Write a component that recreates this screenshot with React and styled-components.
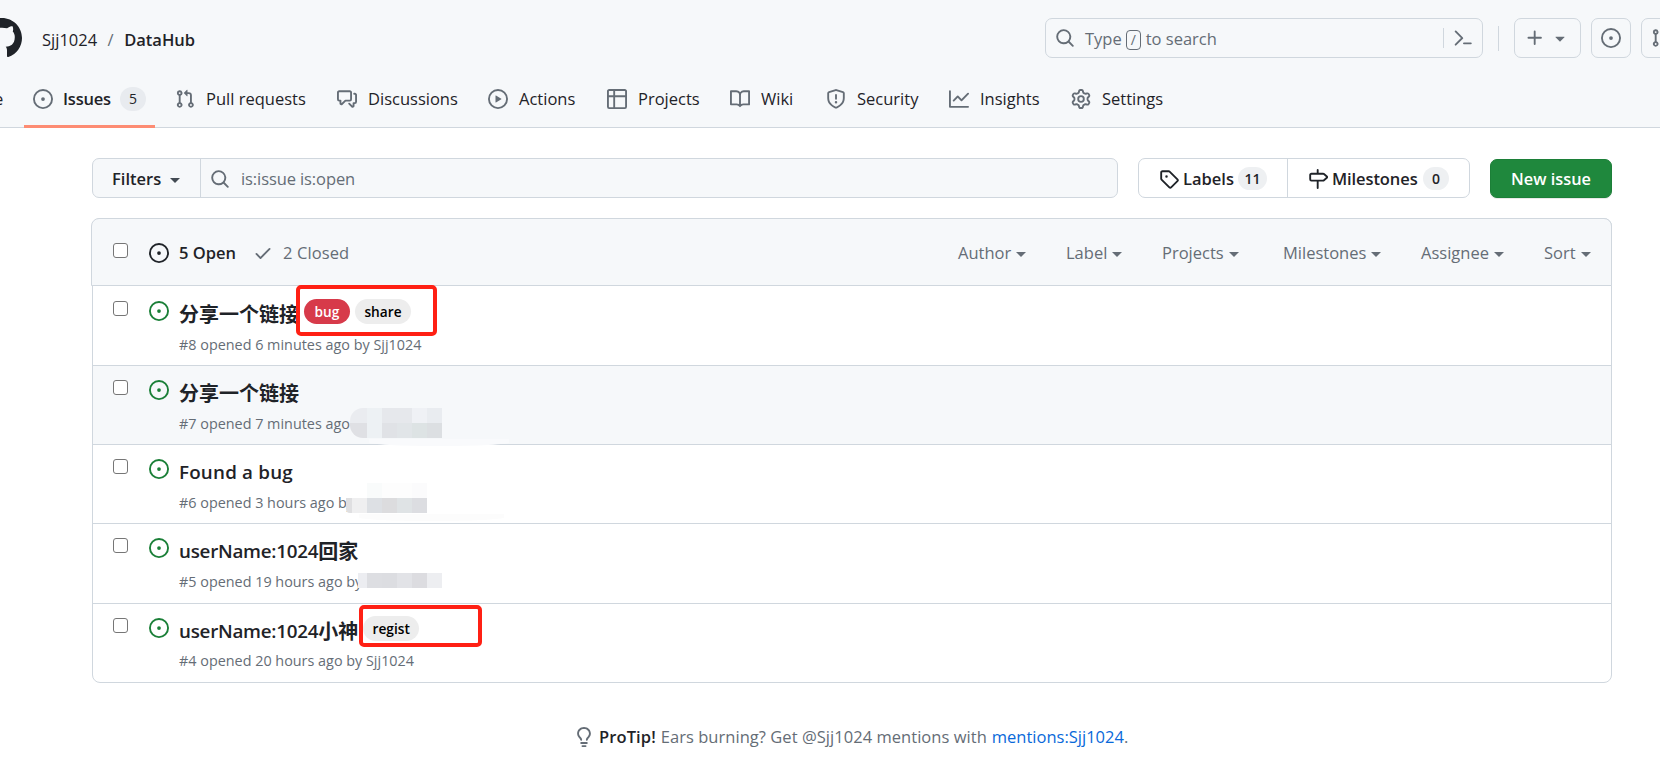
import React from 'react';
import styled, { createGlobalStyle, css } from 'styled-components';

const GlobalStyle = createGlobalStyle`
  * {
    box-sizing: border-box;
  }
  body {
    margin: 0;
    background: #ffffff;
    color: #1f2328;
    font-family: "Open Sans", "Noto Sans CJK SC", sans-serif;
    font-size: 16.5px;
    line-height: 24px;
    overflow: hidden;
  }
`;

const paths = {
  github: 'M8 0c4.42 0 8 3.58 8 8a8.013 8.013 0 0 1-5.45 7.59c-.4.08-.55-.17-.55-.38 0-.27.01-1.13.01-2.2 0-.75-.25-1.23-.54-1.48 1.78-.2 3.65-.88 3.65-3.95 0-.88-.31-1.59-.82-2.15.08-.2.36-1.02-.08-2.12 0 0-.67-.22-2.2.82-.64-.18-1.32-.27-2-.27-.68 0-1.36.09-2 .27-1.53-1.03-2.2-.82-2.2-.82-.44 1.1-.16 1.92-.08 2.12-.51.56-.82 1.28-.82 2.15 0 3.06 1.86 3.75 3.64 3.95-.23.2-.44.55-.51 1.07-.46.21-1.61.55-2.33-.66-.15-.24-.6-.83-1.23-.82-.67.01-.27.38.01.53.34.19.73.9.82 1.13.16.45.68 1.31 2.69.94 0 .67.01 1.3.01 1.49 0 .21-.15.45-.55.38A7.995 7.995 0 0 1 0 8c0-4.42 3.58-8 8-8Z',
  issue: 'M8 9.5a1.5 1.5 0 1 0 0-3 1.5 1.5 0 0 0 0 3ZM8 0a8 8 0 1 1 0 16A8 8 0 0 1 8 0ZM1.5 8a6.5 6.5 0 1 0 13 0 6.5 6.5 0 0 0-13 0Z',
  pull: 'M1.5 3.25a2.25 2.25 0 1 1 3 2.122v5.256a2.251 2.251 0 1 1-1.5 0V5.372A2.25 2.25 0 0 1 1.5 3.25Zm5.677-.177L9.573.677A.25.25 0 0 1 10 .854V2.5h1A2.5 2.5 0 0 1 13.5 5v5.628a2.251 2.251 0 1 1-1.5 0V5a1 1 0 0 0-1-1h-1v1.646a.25.25 0 0 1-.427.177L7.177 3.427a.25.25 0 0 1 0-.354ZM3.75 2.5a.75.75 0 1 0 0 1.5.75.75 0 0 0 0-1.5Zm0 9.5a.75.75 0 1 0 0 1.5.75.75 0 0 0 0-1.5Zm8.25.75a.75.75 0 1 0 1.5 0 .75.75 0 0 0-1.5 0Z',
  discussion: 'M1.75 1h8.5c.966 0 1.75.784 1.75 1.75v5.5A1.75 1.75 0 0 1 10.25 10H7.061l-2.574 2.573A1.458 1.458 0 0 1 2 11.543V10h-.25A1.75 1.75 0 0 1 0 8.25v-5.5C0 1.784.784 1 1.75 1ZM1.5 2.75v5.5c0 .138.112.25.25.25h1a.75.75 0 0 1 .75.75v2.19l2.72-2.72a.749.749 0 0 1 .53-.22h3.5a.25.25 0 0 0 .25-.25v-5.5a.25.25 0 0 0-.25-.25h-8.5a.25.25 0 0 0-.25.25Zm13 2a.25.25 0 0 0-.25-.25h-.5a.75.75 0 0 1 0-1.5h.5c.966 0 1.75.784 1.75 1.75v5.5A1.75 1.75 0 0 1 14.25 12H14v1.543a1.458 1.458 0 0 1-2.487 1.03L9.22 12.28a.749.749 0 0 1 .326-1.275.749.749 0 0 1 .734.215l2.22 2.22v-2.19a.75.75 0 0 1 .75-.75h1a.25.25 0 0 0 .25-.25Z',
  play: 'M8 0a8 8 0 1 1 0 16A8 8 0 0 1 8 0ZM1.5 8a6.5 6.5 0 1 0 13 0 6.5 6.5 0 0 0-13 0Zm4.879-2.773 4.264 2.559a.25.25 0 0 1 0 .428l-4.264 2.559A.25.25 0 0 1 6 10.559V5.442a.25.25 0 0 1 .379-.215Z',
  table: 'M0 1.75C0 .784.784 0 1.75 0h12.5C15.216 0 16 .784 16 1.75v12.5A1.75 1.75 0 0 1 14.25 16H1.75A1.75 1.75 0 0 1 0 14.25ZM6.5 6.5v8h7.75a.25.25 0 0 0 .25-.25V6.5Zm8-1.5V1.75a.25.25 0 0 0-.25-.25H6.5V5Zm-13 1.5v7.75c0 .138.112.25.25.25H5v-8ZM5 5V1.5H1.75a.25.25 0 0 0-.25.25V5Z',
  book: 'M0 1.75A.75.75 0 0 1 .75 1h4.253c1.227 0 2.317.59 3 1.501A3.743 3.743 0 0 1 11.006 1h4.245a.75.75 0 0 1 .75.75v10.5a.75.75 0 0 1-.75.75h-4.507a2.25 2.25 0 0 0-1.591.659l-.622.621a.75.75 0 0 1-1.06 0l-.622-.621A2.25 2.25 0 0 0 5.258 13H.75a.75.75 0 0 1-.75-.75Zm7.251 10.324.004-5.073-.002-2.253A2.25 2.25 0 0 0 5.003 2.5H1.5v9h3.757a3.75 3.75 0 0 1 1.994.574ZM8.755 4.75l-.004 7.322a3.752 3.752 0 0 1 1.992-.572H14.5v-9h-3.495a2.25 2.25 0 0 0-2.25 2.25Z',
  shield: 'M7.467.133a1.748 1.748 0 0 1 1.066 0l5.25 1.68A1.75 1.75 0 0 1 15 3.48V7c0 1.566-.32 3.182-1.303 4.682-.983 1.498-2.585 2.813-5.032 3.855a1.697 1.697 0 0 1-1.33 0c-2.447-1.042-4.049-2.357-5.032-3.855C1.32 10.182 1 8.566 1 7V3.48a1.755 1.755 0 0 1 1.217-1.667Zm.61 1.429a.25.25 0 0 0-.153 0l-5.25 1.68a.25.25 0 0 0-.174.238V7c0 1.358.275 2.666 1.057 3.86.784 1.194 2.121 2.34 4.366 3.297a.196.196 0 0 0 .154 0c2.245-.956 3.582-2.104 4.366-3.298C13.225 9.666 13.5 8.36 13.5 7V3.48a.251.251 0 0 0-.174-.237l-5.25-1.68ZM8.75 4.75v3a.75.75 0 0 1-1.5 0v-3a.75.75 0 0 1 1.5 0ZM9 10.5a1 1 0 1 1-2 0 1 1 0 0 1 2 0Z',
  graph: 'M1.5 1.75V13.5h13.75a.75.75 0 0 1 0 1.5H.75a.75.75 0 0 1-.75-.75V1.75a.75.75 0 0 1 1.5 0Zm14.28 2.53-5.25 5.25a.75.75 0 0 1-1.06 0L7 7.06 4.28 9.78a.751.751 0 0 1-1.042-.018.751.751 0 0 1-.018-1.042l3.25-3.25a.75.75 0 0 1 1.06 0L10 7.94l4.72-4.72a.751.751 0 0 1 1.042.018.751.751 0 0 1 .018 1.042Z',
  gear: 'M8 0a8.2 8.2 0 0 1 .701.031C9.444.095 9.99.645 10.16 1.29l.288 1.107c.018.066.079.158.212.224.231.114.454.243.668.386.123.082.233.09.299.071l1.103-.303c.644-.176 1.392.021 1.82.63.27.385.506.792.704 1.218.315.675.111 1.422-.364 1.891l-.814.806c-.049.048-.098.147-.088.294.016.257.016.515 0 .772-.01.147.038.246.088.294l.814.806c.475.469.679 1.216.364 1.891a7.977 7.977 0 0 1-.704 1.217c-.428.61-1.176.807-1.82.63l-1.102-.302c-.067-.019-.177-.011-.3.071a5.909 5.909 0 0 1-.668.386c-.133.066-.194.158-.211.224l-.29 1.106c-.168.646-.715 1.196-1.458 1.26a8.006 8.006 0 0 1-1.402 0c-.743-.064-1.289-.614-1.458-1.26l-.289-1.106c-.018-.066-.079-.158-.212-.224a5.738 5.738 0 0 1-.668-.386c-.123-.082-.233-.09-.299-.071l-1.103.303c-.644.176-1.392-.021-1.82-.63a8.12 8.12 0 0 1-.704-1.218c-.315-.675-.111-1.422.363-1.891l.815-.806c.05-.048.098-.147.088-.294a6.214 6.214 0 0 1 0-.772c.01-.147-.038-.246-.088-.294l-.815-.806C.635 6.045.431 5.298.746 4.623a7.92 7.92 0 0 1 .704-1.217c.428-.61 1.176-.807 1.82-.63l1.102.302c.067.019.177.011.3-.071.214-.143.437-.272.668-.386.133-.066.194-.158.211-.224l.29-1.106C6.009.645 6.556.095 7.299.03 7.53.01 7.764 0 8 0Zm-.571 1.525c-.036.003-.108.036-.137.146l-.289 1.105c-.147.561-.549.967-.998 1.189-.173.086-.34.183-.5.29-.417.278-.97.423-1.529.27l-1.103-.303c-.109-.03-.175.016-.195.045-.22.312-.412.644-.573.99-.014.031-.021.11.059.19l.815.806c.411.406.562.957.53 1.456a4.709 4.709 0 0 0 0 .582c.032.499-.119 1.05-.53 1.456l-.815.806c-.081.08-.073.159-.059.19.162.346.353.677.573.989.02.03.085.076.195.046l1.102-.303c.56-.153 1.113-.008 1.53.27.161.107.328.204.501.29.447.222.85.629.997 1.189l.289 1.105c.029.109.101.143.137.146a6.6 6.6 0 0 0 1.142 0c.036-.003.108-.036.137-.146l.289-1.105c.147-.561.549-.967.998-1.189.173-.086.34-.183.5-.29.417-.278.97-.423 1.529-.27l1.103.303c.109.029.175-.016.195-.045.22-.313.411-.644.573-.99.014-.031.021-.11-.059-.19l-.815-.806c-.411-.406-.562-.957-.53-1.456a4.709 4.709 0 0 0 0-.582c-.032-.499.119-1.05.53-1.456l.815-.806c.081-.08.073-.159.059-.19a6.464 6.464 0 0 0-.573-.989c-.02-.03-.085-.076-.195-.046l-1.102.303c-.56.153-1.113.008-1.53-.27a4.44 4.44 0 0 0-.501-.29c-.447-.222-.85-.629-.997-1.189l-.289-1.105c-.029-.11-.101-.143-.137-.146a6.6 6.6 0 0 0-1.142 0ZM11 8a3 3 0 1 1-6 0 3 3 0 0 1 6 0ZM9.5 8a1.5 1.5 0 1 0-3.001.001A1.5 1.5 0 0 0 9.5 8Z',
  search: 'M10.68 11.74a6 6 0 0 1-7.922-8.982 6 6 0 0 1 8.982 7.922l3.04 3.04a.749.749 0 0 1-.326 1.275.749.749 0 0 1-.734-.215ZM11.5 7a4.499 4.499 0 1 0-8.997 0A4.499 4.499 0 0 0 11.5 7Z',
  prompt: 'm6.354 8.04-4.773 4.773a.75.75 0 1 0 1.061 1.06L7.945 8.57a.75.75 0 0 0 0-1.06L2.642 2.206a.75.75 0 0 0-1.06 1.061L6.353 8.04ZM8.75 11.5a.75.75 0 0 0 0 1.5h5.5a.75.75 0 0 0 0-1.5h-5.5Z',
  plus: 'M7.75 2a.75.75 0 0 1 .75.75V7h4.25a.75.75 0 0 1 0 1.5H8.5v4.25a.75.75 0 0 1-1.5 0V8.5H2.75a.75.75 0 0 1 0-1.5H7V2.75A.75.75 0 0 1 7.75 2Z',
  triangle: 'm4.427 7.427 3.396 3.396a.25.25 0 0 0 .354 0l3.396-3.396A.25.25 0 0 0 11.396 7H4.604a.25.25 0 0 0-.177.427Z',
  tag: 'M1 7.775V2.75C1 1.784 1.784 1 2.75 1h5.025c.464 0 .91.184 1.238.513l6.25 6.25a1.75 1.75 0 0 1 0 2.474l-5.026 5.026a1.75 1.75 0 0 1-2.474 0l-6.25-6.25A1.752 1.752 0 0 1 1 7.775Zm1.5 0c0 .066.026.13.073.177l6.25 6.25a.25.25 0 0 0 .354 0l5.025-5.025a.25.25 0 0 0 0-.354l-6.25-6.25a.25.25 0 0 0-.177-.073H2.75a.25.25 0 0 0-.25.25ZM6 5a1 1 0 1 1 0 2 1 1 0 0 1 0-2Z',
  milestone: 'M7.75 0a.75.75 0 0 1 .75.75V3h3.634c.414 0 .814.147 1.13.414l2.07 1.75a1.75 1.75 0 0 1 0 2.672l-2.07 1.75a1.75 1.75 0 0 1-1.13.414H8.5v5.25a.75.75 0 0 1-1.5 0V10H2.75A1.75 1.75 0 0 1 1 8.25v-3.5C1 3.784 1.784 3 2.75 3H7V.75A.75.75 0 0 1 7.75 0Zm4.384 8.5a.25.25 0 0 0 .161-.06l2.07-1.75a.248.248 0 0 0 0-.38l-2.07-1.75a.25.25 0 0 0-.161-.06H2.75a.25.25 0 0 0-.25.25v3.5c0 .138.112.25.25.25h9.384Z',
  check: 'M13.78 4.22a.75.75 0 0 1 0 1.06l-7.25 7.25a.75.75 0 0 1-1.06 0L2.22 9.28a.751.751 0 0 1 .018-1.042.751.751 0 0 1 1.042-.018L6 10.94l6.72-6.72a.75.75 0 0 1 1.06 0Z',
  bulb: 'M8 1.5c-2.363 0-4 1.69-4 3.75 0 .984.424 1.625.984 2.304l.214.253c.223.264.47.556.673.848.284.411.537.896.621 1.49a.75.75 0 0 1-1.484.211c-.04-.282-.163-.547-.37-.847a8.456 8.456 0 0 0-.542-.68c-.084-.1-.173-.205-.268-.32C3.201 7.75 2.5 6.766 2.5 5.25 2.5 2.31 4.863 0 8 0s5.5 2.31 5.5 5.25c0 1.516-.701 2.5-1.328 3.259-.095.115-.184.22-.268.319-.207.245-.383.453-.541.681-.208.3-.33.565-.37.847a.751.751 0 0 1-1.485-.212c.084-.593.337-1.078.621-1.489.203-.292.45-.584.673-.848.075-.088.147-.173.213-.253.561-.679.985-1.32.985-2.304 0-2.06-1.637-3.75-4-3.75ZM5.75 12h4.5a.75.75 0 0 1 0 1.5h-4.5a.75.75 0 0 1 0-1.5ZM6 15.25a.75.75 0 0 1 .75-.75h2.5a.75.75 0 0 1 0 1.5h-2.5a.75.75 0 0 1-.75-.75Z',
};

const Svg = styled.svg`
  display: block;
  flex: none;
  width: ${({ $size }) => $size || 20}px;
  height: ${({ $size }) => $size || 20}px;
  fill: ${({ $color }) => $color || '#656d76'};
`;

const Icon = ({ name, size, color }) => (
  <Svg viewBox="0 0 16 16" $size={size} $color={color}>
    <path fillRule="evenodd" d={paths[name]} />
  </Svg>
);

const Text = styled.span`
  flex: none;
  white-space: pre;
  width: ${({ $w }) => ($w ? `${$w}px` : 'auto')};
  letter-spacing: ${({ $ls }) => $ls || 0}px;
  font-weight: ${({ $bold }) => ($bold ? 600 : 400)};
`;

const Page = styled.div`
  width: 1660px;
  height: 771px;
  overflow: hidden;
`;

const Header = styled.header`
  height: 128px;
  background: #f6f8fa;
  border-bottom: 1px solid #d0d7de;
`;

const TopBar = styled.div`
  display: flex;
  align-items: center;
  height: 76px;
  margin-left: -18px;
  width: 1720px;
`;

const Crumbs = styled.div`
  display: flex;
  align-items: center;
  flex: none;
  width: 1023px;
  height: 40px;
  padding: 3px 0 0 20px;
`;

const Slash = styled.span`
  width: 27px;
  text-align: center;
  color: #656d76;
`;

const SearchBox = styled.div`
  display: flex;
  align-items: center;
  flex: none;
  width: 438px;
  height: 40px;
  padding: 0 9px 0 9px;
  border: 1px solid #d0d7de;
  border-radius: 7px;
  color: #656d76;
`;

const Hint = styled.div`
  display: flex;
  align-items: center;
  flex: 1;
  padding: 2px 0 0 10px;
`;

const Key = styled.kbd`
  width: 15px;
  height: 20px;
  margin: 2px 5px 0 4px;
  border: 1px solid #656d76;
  border-radius: 4px;
  font: 14px/17px "Open Sans", sans-serif;
  text-align: center;
`;

const Divider = styled.div`
  flex: none;
  width: 1px;
  height: ${({ $h }) => $h}px;
  margin: ${({ $m }) => $m};
  background: #d0d7de;
`;

const HeaderButton = styled.div`
  display: flex;
  align-items: center;
  justify-content: center;
  gap: ${({ $gap }) => $gap || 0}px;
  flex: none;
  width: ${({ $w }) => $w || 40}px;
  height: 40px;
  margin-right: 10px;
  border: 1px solid #d0d7de;
  border-radius: 7px;
`;

const Nav = styled.nav`
  display: grid;
  grid-template-columns: 23px 142px 162px 151px 119px 123px 96px 123px 122px auto;
  height: 52px;
`;

const Clipped = styled.span`
  padding-top: 11px;
  margin-left: -6px;
`;

const NavItem = styled.div`
  display: flex;
  align-items: center;
  gap: 11px;
  margin-right: 10px;
  padding: 0 0 7px 10px;
  ${({ $active }) => $active && css`
    gap: 10px;
    margin-left: 1px;
    padding-left: 9px;
    border-bottom: 3px solid #fd8c73;
    padding-bottom: 4px;
  `}
`;

const Counter = styled.span`
  flex: none;
  width: ${({ $w }) => $w || 26}px;
  height: ${({ $h }) => $h || 24}px;
  border-radius: 12px;
  background: ${({ $bg }) => $bg || '#eef0f2'};
  font-size: 14px;
  font-weight: ${({ $bold }) => ($bold ? 600 : 400)};
  line-height: ${({ $h }) => $h || 24}px;
  text-align: center;
`;

const Main = styled.main`
  width: 1520px;
  margin: 30px 0 0 92px;
`;

const Toolbar = styled.div`
  display: flex;
  height: 40px;
  margin-bottom: 20px;
`;

const FilterGroup = styled.div`
  display: flex;
  width: 1026px;
  height: 40px;
  border: 1px solid #d0d7de;
  border-radius: 7px;
  background: #f6f8fa;
`;

const FilterButton = styled.div`
  display: flex;
  align-items: center;
  width: 108px;
  padding: 1px 0 0 19px;
  border-right: 1px solid #d0d7de;
`;

const FilterInput = styled.div`
  display: flex;
  align-items: center;
  gap: 11px;
  padding: 1px 0 0 9px;
  color: #656d76;
`;

const LinkGroup = styled.div`
  display: flex;
  width: 332px;
  margin: 0 20px;
  border: 1px solid #d0d7de;
  border-radius: 7px;
`;

const LinkButton = styled.div`
  display: flex;
  align-items: center;
  gap: 4px;
  width: ${({ $w }) => $w}px;
  padding: 1px 0 0 20px;
  & + & {
    border-left: 1px solid #d0d7de;
  }
`;

const NewIssue = styled.button`
  width: 122px;
  height: 39px;
  margin-top: 1px;
  padding: 1px 0 0;
  border: 1px solid #1c7f38;
  border-radius: 7px;
  background: #1f883d;
  box-shadow: 0 1px 0 rgba(31, 35, 40, 0.1);
  color: #ffffff;
  font: 600 16.3px "Open Sans", sans-serif;
`;

const Box = styled.section`
  border: 1px solid #d0d7de;
  border-radius: 8px;
  height: 465px;
`;

const BoxHeader = styled.div`
  display: flex;
  align-items: center;
  height: 68px;
  margin: -1px -1px 0 -2px;
  padding: 1px 0 0 22px;
  border: 1px solid #d0d7de;
  border-radius: 8px 8px 0 0;
  background: #f6f8fa;
  color: #656d76;
`;

const Checkbox = styled.span`
  flex: none;
  width: 15px;
  height: 15px;
  border: 1px solid #767676;
  border-radius: 3px;
  background: #ffffff;
`;

const HeaderCheck = styled(Checkbox)`
  margin: -5px 21px 0 -1px;
`;

const OpenCount = styled.div`
  display: flex;
  align-items: center;
  gap: 10px;
  width: 104px;
  color: #1f2328;
`;

const ClosedCount = styled.div`
  display: flex;
  align-items: center;
  gap: 10px;
  flex: 1;
`;

const Menus = styled.div`
  display: grid;
  grid-template-columns: 108px 96px 121px 138px 123px 67px;
`;

const Menu = styled.div`
  display: flex;
  align-items: center;
`;

const Caret = styled.span`
  width: 0;
  height: 0;
  margin: 3px 0 0 5px;
  border: 5px solid transparent;
  border-top-color: ${({ $dark }) => ($dark ? '#424a53' : '#656d76')};
  border-bottom: 0;
`;

const Row = styled.div`
  position: relative;
  display: flex;
  height: ${({ $h }) => $h}px;
  padding: 15px 0 0 20px;
  background: ${({ $hover }) => ($hover ? '#f6f8fa' : 'transparent')};
  & + & {
    border-top: 1px solid #d0d7de;
    padding-top: 14px;
  }
`;

const RowIcon = styled.div`
  margin: 0 10px 0 21px;
`;

const TitleLine = styled.div`
  display: flex;
  align-items: center;
  height: 26px;
  font-size: 18.8px;
  font-weight: 600;
  white-space: nowrap;
`;

const Cjk = styled.span`
  font-family: "Noto Sans CJK SC", sans-serif;
  font-size: 20px;
  font-weight: 700;
`;

const Meta = styled.div`
  height: 22px;
  margin-top: 8px;
  color: #656d76;
  font-size: 14.38px;
  line-height: 20px;
  white-space: pre;
  ${Row}:last-child & {
    margin-top: 7px;
  }
`;

const Badge = styled.span`
  position: relative;
  top: -3px;
  width: ${({ $w }) => $w}px;
  height: 25px;
  margin-left: 5px;
  border-radius: 13px;
  background: ${({ $bg }) => $bg || '#ededed'};
  color: ${({ $fg }) => $fg || '#000000'};
  font-size: 13.7px;
  font-weight: 600;
  line-height: 25px;
  text-align: center;
`;

const Highlight = styled.div`
  position: absolute;
  left: ${({ $x }) => $x}px;
  top: ${({ $y }) => $y}px;
  width: ${({ $w }) => $w}px;
  height: ${({ $h }) => $h}px;
  border: 4px solid #ff2014;
  border-radius: 5px;
`;

// pixelated cover over a user name
const Mosaic = styled.div`
  position: absolute;
  left: ${({ $x }) => $x}px;
  top: ${({ $y }) => $y}px;
  display: grid;
  grid-template-columns: ${({ $cols }) => $cols};
  grid-auto-rows: 15px;
  border-radius: ${({ $r }) => $r || 0};
  overflow: hidden;
`;

const Cell = styled.span`
  background: ${({ $c }) => $c};
`;

const Smear = styled.div`
  position: absolute;
  z-index: 1;
  left: ${({ $x }) => $x}px;
  top: ${({ $y }) => $y}px;
  width: ${({ $w }) => $w}px;
  height: ${({ $h }) => $h}px;
  border-radius: 0 0 50% 50%;
  background: ${({ $c }) => $c};
`;

const ProTip = styled.div`
  display: flex;
  align-items: center;
  margin: 42px 0 0 482px;
  color: #656d76;
`;

const Strong = styled(Text)`
  margin: 0 5px 0 5px;
  color: #1f2328;
`;

const Link = styled(Text)`
  margin-left: 5px;
  color: #0969da;
`;

const navItems = [
  { icon: 'pull', label: 'Pull requests' },
  { icon: 'discussion', label: 'Discussions' },
  { icon: 'play', label: 'Actions' },
  { icon: 'table', label: 'Projects' },
  { icon: 'book', label: 'Wiki' },
  { icon: 'shield', label: 'Security' },
  { icon: 'graph', label: 'Insights' },
  { icon: 'gear', label: 'Settings' },
];

const menus = ['Author', 'Label', 'Projects', 'Milestones', 'Assignee', 'Sort'];

const issues = [
  {
    id: 8, h: 79, cjk: '分享一个链接', meta: '#8 opened 6 minutes ago by Sjj1024',
    badges: [{ text: 'bug', w: 46, bg: '#d73a4a', fg: '#ffffff' }, { text: 'share', w: 56 }],
    box: { x: 203, y: -1, w: 141, h: 51 },
  },
  {
    id: 7, h: 79, hover: true, cjk: '分享一个链接', meta: '#7 opened 7 minutes ago',
    mosaic: {
      x: 257, y: 42, cols: '17px repeat(5, 15px)', r: '13px 0 0 13px',
      cells: ['#eaecf0', '#edf1f4', '#e6e8ec', '#e6e8ec', '#eff1f5', '#e9ecf0', '#dfe0e4', '#edf1f4', '#e0e2e6', '#e1e5e8', '#dde3e4', '#dcdfe2'],
    },
    smear: { x: 276, y: 73, w: 140, h: 7, c: '#f9fafc' },
  },
  {
    id: 6, h: 79, latin: 'Found a bug', ls: 0.2, meta: '#6 opened 3 hours ago by',
    mosaic: {
      x: 253, y: 38, cols: '6px repeat(5, 15px)', r: '0 0 0 4px',
      cells: ['#ffffff00', '#ffffff00', '#f9fbfb', '#fdfdfd', '#fdfdfd', '#fbfbfc', '#dfdfe1', '#efeff0', '#dde0e4', '#dcdcde', '#dfe3e5', '#dcdde1'],
    },
    smear: { x: 266, y: 69, w: 145, h: 7, c: '#fcfcfc' },
  },
  {
    id: 5, h: 80, latin: 'userName:1024', ls: -0.25, cjk: '回家', meta: '#5 opened 19 hours ago by',
    mosaic: {
      x: 265, y: 49, cols: '9px repeat(5, 15px)', r: '0',
      cells: ['#ecedf1', '#dddee2', '#dcdde1', '#e2e3e7', '#dcdce0', '#edeef1'],
    },
  },
  {
    id: 4, h: 79, latin: 'userName:1024', ls: -0.25, cjk: '小神', meta: '#4 opened 20 hours ago by Sjj1024',
    badges: [{ text: 'regist', w: 56 }],
    box: { x: 266, y: 1, w: 123, h: 42 },
  },
];

const IssueRow = ({ issue }) => (
  <Row $h={issue.h} $hover={issue.hover}>
    <Checkbox />
    <RowIcon><Icon name="issue" color="#1a7f37" /></RowIcon>
    <div>
      <TitleLine>
        {issue.latin && <Text $bold $ls={issue.ls}>{issue.latin}</Text>}
        {issue.cjk && <Cjk>{issue.cjk}</Cjk>}
        {issue.badges && issue.badges.map((b) => (
          <Badge key={b.text} $w={b.w} $bg={b.bg} $fg={b.fg}>{b.text}</Badge>
        ))}
      </TitleLine>
      <Meta>{issue.meta}</Meta>
    </div>
    {issue.smear && (
      <Smear $x={issue.smear.x} $y={issue.smear.y} $w={issue.smear.w} $h={issue.smear.h} $c={issue.smear.c} />
    )}
    {issue.mosaic && (
      <Mosaic $x={issue.mosaic.x} $y={issue.mosaic.y} $cols={issue.mosaic.cols} $r={issue.mosaic.r}>
        {issue.mosaic.cells.map((c, i) => <Cell key={i} $c={c} />)}
      </Mosaic>
    )}
    {issue.box && <Highlight $x={issue.box.x} $y={issue.box.y} $w={issue.box.w} $h={issue.box.h} />}
  </Row>
);

const App = () => (
  <Page>
    <GlobalStyle />
    <Header>
      <TopBar>
        <Icon name="github" size={40} color="#1f2328" />
        <Crumbs>
          <Text>Sjj1024</Text>
          <Slash>/</Slash>
          <Text $bold>DataHub</Text>
        </Crumbs>
        <SearchBox>
          <Icon name="search" />
          <Hint>
            <Text>Type</Text>
            <Key>/</Key>
            <Text>to search</Text>
          </Hint>
          <Divider $h={20} $m="0 9px 0 0" />
          <Icon name="prompt" />
        </SearchBox>
        <Divider $h={25} $m="0 15px" />
        <HeaderButton $w={67} $gap={5}>
          <Icon name="plus" />
          <Icon name="triangle" />
        </HeaderButton>
        <HeaderButton><Icon name="issue" /></HeaderButton>
        <HeaderButton><Icon name="pull" /></HeaderButton>
      </TopBar>
      <Nav>
        <Clipped>e</Clipped>
        <NavItem $active>
          <Icon name="issue" />
          <Text $bold $w={47} $ls={-0.2}>Issues</Text>
          <Counter $bg="#e8ebef">5</Counter>
        </NavItem>
        {navItems.map((item) => (
          <NavItem key={item.label}>
            <Icon name={item.icon} />
            <Text>{item.label}</Text>
          </NavItem>
        ))}
      </Nav>
    </Header>
    <Main>
      <Toolbar>
        <FilterGroup>
          <FilterButton>
            <Text $bold $w={53}>Filters</Text>
            <Caret $dark />
          </FilterButton>
          <FilterInput>
            <Icon name="search" />
            <Text $ls={-0.1}>is:issue is:open</Text>
          </FilterInput>
        </FilterGroup>
        <LinkGroup>
          <LinkButton $w={148}>
            <Icon name="tag" color="#1f2328" />
            <Text $bold $w={51}>Labels</Text>
            <Counter $w={29} $h={23} $bold>11</Counter>
          </LinkButton>
          <LinkButton $w={182}>
            <Icon name="milestone" color="#1f2328" />
            <Text $bold $w={87} $ls={-0.1}>Milestones</Text>
            <Counter $h={23} $bold>0</Counter>
          </LinkButton>
        </LinkGroup>
        <NewIssue>New issue</NewIssue>
      </Toolbar>
      <Box>
        <BoxHeader>
          <HeaderCheck />
          <OpenCount>
            <Icon name="issue" color="#1f2328" />
            <Text $bold>5 Open</Text>
          </OpenCount>
          <ClosedCount>
            <Icon name="check" />
            <Text $ls={0.1}>2 Closed</Text>
          </ClosedCount>
          <Menus>
            {menus.map((label) => (
              <Menu key={label}>
                <Text>{label}</Text>
                <Caret />
              </Menu>
            ))}
          </Menus>
        </BoxHeader>
        {issues.map((issue) => <IssueRow key={issue.id} issue={issue} />)}
      </Box>
      <ProTip>
        <Icon name="bulb" />
        <Strong $bold $ls={0.1}>ProTip!</Strong>
        <Text $ls={0.04}>Ears burning? Get @Sjj1024 mentions with</Text>
        <Link>mentions:Sjj1024</Link>
        <Text>.</Text>
      </ProTip>
    </Main>
  </Page>
);

export default App;
